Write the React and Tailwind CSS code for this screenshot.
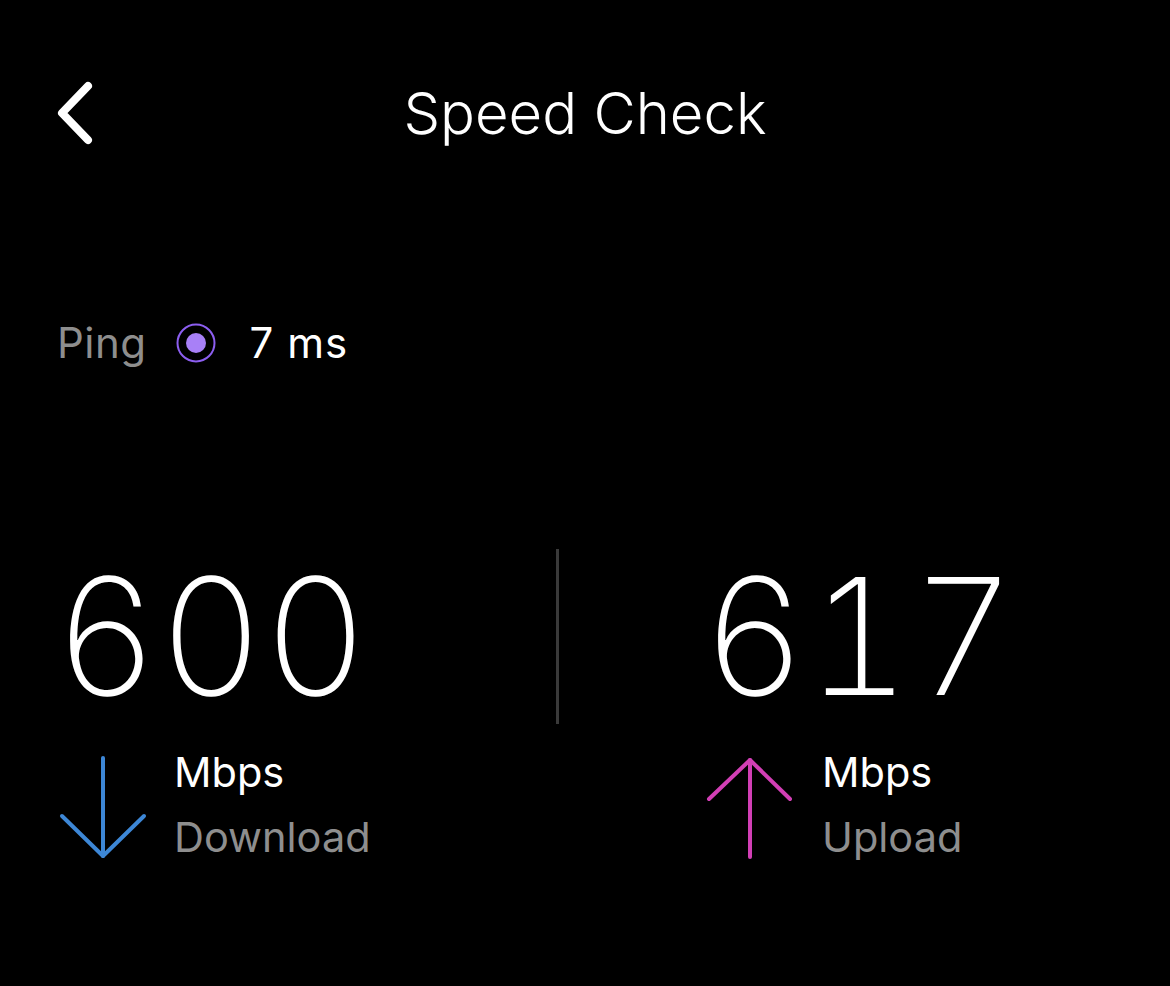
import React from 'react';

const ChevronLeft = () => (
    <svg width="40" height="64" viewBox="0 0 40 64" fill="none">
        <path d="M32 5 L6 32 L32 59" stroke="#ffffff" strokeWidth="8" strokeLinecap="round" strokeLinejoin="round" />
    </svg>
);

const PingDot = () => (
    <svg width="40" height="40" viewBox="0 0 40 40" fill="none">
        <circle cx="20" cy="20" r="18.5" stroke="#8c5ef0" strokeWidth="2" />
        <circle cx="20" cy="20" r="10" fill="#a880f7" />
    </svg>
);

const ArrowDown = () => (
    <svg width="90" height="106" viewBox="0 0 90 106" fill="none">
        <path d="M45 4 L45 102" stroke="#3d87d6" strokeWidth="4" strokeLinecap="round" />
        <path d="M4 62 L45 102 L86 62" stroke="#3d87d6" strokeWidth="4" strokeLinecap="round" strokeLinejoin="round" />
    </svg>
);

const ArrowUp = () => (
    <svg width="90" height="106" viewBox="0 0 90 106" fill="none">
        <path d="M44 6 L44 103" stroke="#d23fb5" strokeWidth="4" strokeLinecap="round" />
        <path d="M3 45 L44 6 L84 45" stroke="#d23fb5" strokeWidth="4" strokeLinecap="round" strokeLinejoin="round" />
    </svg>
);

const Stat = ({ value, label, arrow }) => (
    <div className="pt-[6px]">
        <div className="text-[162px] leading-none font-extralight text-white tabular-nums tracking-[0px] -ml-[4px]">
            {value}
        </div>
        <div className="mt-[35px] flex items-start">
            <div className="mt-[2px]">{arrow}</div>
            <div className="ml-[26px] text-[41.5px] leading-none">
                <div className="text-white">Mbps</div>
                <div className="mt-[23px] text-[#8e8e8e]">{label}</div>
            </div>
        </div>
    </div>
);

export default function App() {
    return (
        <div className="w-[1170px] h-[986px] bg-black overflow-hidden" style={{ fontFamily: 'Inter, "Noto Sans", sans-serif' }}>
            <div className="pt-[81px] grid grid-cols-[1fr_auto_1fr] items-center">
                <div className="pl-[56px]">
                    <ChevronLeft />
                </div>
                <h1 className="text-[58px] leading-none font-light text-white">Speed Check</h1>
                <div />
            </div>

            <div className="mt-[177px] pl-[57px] flex items-center text-[42px] leading-none">
                <span className="text-[#8e8e8e] tracking-[0.5px]">Ping</span>
                <div className="ml-[29px]">
                    <PingDot />
                </div>
                <span className="ml-[34px] text-white tracking-[1px]">7 ms</span>
            </div>

            <div className="mt-[185px] pl-[58px] flex items-start">
                <div className="w-[498px]">
                    <Stat value="600" label="Download" arrow={<ArrowDown />} />
                </div>
                <div className="w-[3px] h-[175px] bg-[#3a3a3a]" />
                <div className="pl-[147px]">
                    <Stat value="617" label="Upload" arrow={<ArrowUp />} />
                </div>
            </div>
        </div>
    );
}
